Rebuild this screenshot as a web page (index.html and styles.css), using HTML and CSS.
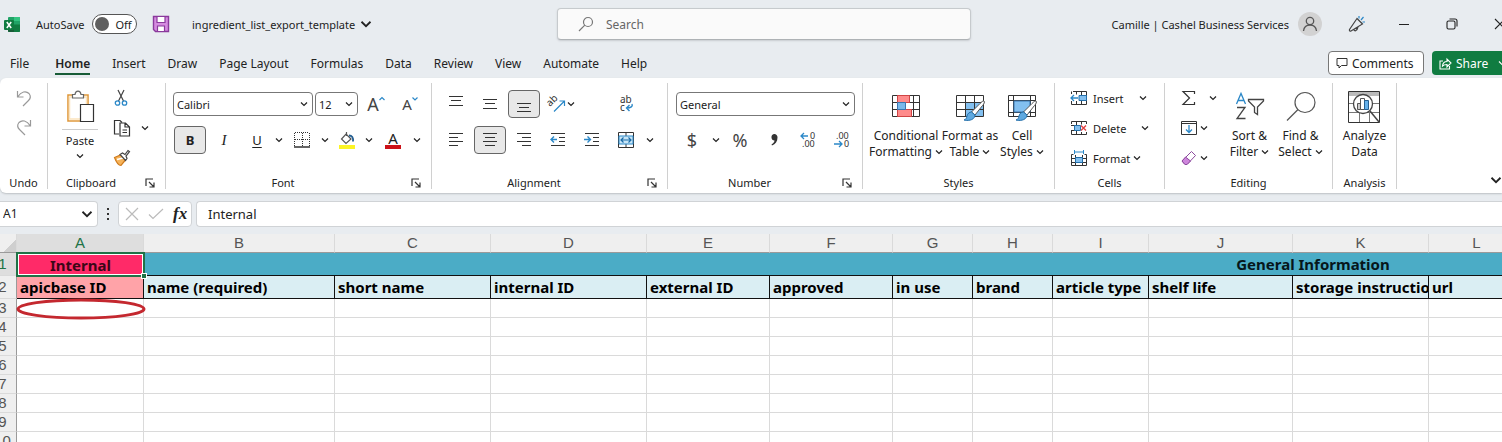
FILE: index.html
```html
<!DOCTYPE html>
<html lang="en">
<head>
  <meta charset="UTF-8">
  <title>ingredient_list_export_template</title>
  <link rel="stylesheet" href="styles.css">
</head>
<body>
  <!-- shared icons -->
  <svg class="sprite" aria-hidden="true">
    <symbol id="chev" viewBox="0 0 8 8"><path d="M1 2.500L4 5.500l3-3" fill="none" stroke="currentColor" stroke-width="1.200"/></symbol>
    <symbol id="launch" viewBox="0 0 10 10"><path d="M1 8V1h7M4 4l4.500 4.500M9 4.500V9H4.500" fill="none" stroke="#333" stroke-width="1.200"/></symbol>
    <symbol id="brush" viewBox="0 0 22 22"><path d="M21 1c1 1 0 3-1.500 4.500L12 15l-3.500-3L17 3.500C18.500 2 20 .5 21 1z" fill="#fff" stroke="#555"/><path d="M8.500 12l3.500 3c0 4-5 6.500-11 5 2-.5 2.500-2 3-4 .5-2.500 2.500-4 4.500-4z" fill="#5fa9e0" stroke="#2470ab"/></symbol>
  </svg>

  <!-- ===== Title bar ===== -->
  <header class="title-bar">
    <svg class="logo" width="17" height="17" viewBox="0 0 17 17"><rect x="4" y="1" width="12" height="15" rx="1" fill="#21a366"/><path d="M10 1h5a1 1 0 0 1 1 1v3h-6z" fill="#33c481"/><path d="M4 8.500h6V16H5a1 1 0 0 1-1-1z" fill="#185c37"/><path d="M10 8.500h6V15a1 1 0 0 1-1 1h-5z" fill="#107c41"/><rect y="4" width="10" height="10" rx="1" fill="#107c41"/><path d="M2.800 6l4.400 6M7.200 6l-4.400 6" stroke="#fff" stroke-width="1.500"/></svg>
    <label class="autosave">AutoSave
      <input type="checkbox">
      <span class="switch"><span class="knob"></span>Off</span>
    </label>
    <button class="plain save" aria-label="Save"><svg width="18" height="18" viewBox="0 0 18 18"><path d="M1.500 1.500h15v15H3.500l-2-2z" fill="#d58be0" stroke="#8a3a9c" stroke-width="1.400"/><path d="M5 1.500h8v6H5zM5.500 11h7v5.500h-7z" fill="#fff" stroke="#8a3a9c" stroke-width="1.200"/></svg></button>
    <button class="plain file-name">ingredient_list_export_template <svg class="chev-lg"><use href="#chev"/></svg></button>
    <label class="search">
      <svg width="16" height="16" viewBox="0 0 16 16" fill="none" stroke="#777" stroke-width="1.200"><circle cx="10" cy="6" r="4.500"/><path d="M6.800 9.200L1 15"/></svg>
      <input type="text" placeholder="Search" aria-label="Search">
    </label>
    <div class="account">
      <span>Camille | Cashel Business Services</span>
      <svg width="24" height="24" viewBox="0 0 24 24"><circle cx="12" cy="12" r="12" fill="#d2d2d2"/><g fill="none" stroke="#555" stroke-width="1.300"><circle cx="12" cy="9" r="3.700"/><path d="M5.500 19c.5-4 3-6 6.500-6s6 2 6.500 6"/></g></svg>
    </div>
    <div class="window-buttons">
      <button class="plain" aria-label="Coming soon"><svg width="18" height="18" viewBox="0 0 18 18" fill="none" stroke="#444" stroke-width="1.200"><path d="M9 3.500L1.500 14.500c-.5 1 .5 2 1.500 1.500L14.500 9zM6 14.500c0 2 3 2 4-2.500"/><path d="M11 3.500V1M13 5l2.500-3M14.500 7H17" stroke="#2b88c8"/></svg></button>
      <button class="plain" aria-label="Minimize"><svg width="12" height="12" viewBox="0 0 12 12"><path d="M1 6.500h10" stroke="#222"/></svg></button>
      <button class="plain" aria-label="Restore"><svg width="12" height="12" viewBox="0 0 12 12" fill="none" stroke="#222" stroke-width="1.100"><rect x="1" y="3" width="8" height="8" rx="1.500"/><path d="M3.500 1H9a2 2 0 0 1 2 2v5.500"/></svg></button>
      <button class="plain" aria-label="Close"><svg width="12" height="12" viewBox="0 0 12 12"><path d="M1 1l10 10M11 1L1 11" stroke="#222" stroke-width="1.100"/></svg></button>
    </div>
  </header>

  <!-- ===== Tabs ===== -->
  <nav class="tabs">
    <a href="#">File</a>
    <a href="#" class="active">Home</a>
    <a href="#">Insert</a>
    <a href="#">Draw</a>
    <a href="#">Page Layout</a>
    <a href="#">Formulas</a>
    <a href="#">Data</a>
    <a href="#">Review</a>
    <a href="#">View</a>
    <a href="#">Automate</a>
    <a href="#">Help</a>
    <div class="tab-actions">
      <button class="comments"><svg width="12" height="12" viewBox="0 0 12 12"><path d="M1 1.500h10v7H5.500L3 11V8.500H1z" fill="none" stroke="#333"/></svg>Comments</button>
      <button class="share"><svg width="13" height="13" viewBox="0 0 13 13" fill="none" stroke="#fff" stroke-width="1.100"><path d="M4 4H1v8h9.500V9"/><path d="M3.500 9c.3-3 2-4.500 4.500-4.500V2l4 4-4 4V7.500C6 7.500 4.500 8 3.500 9z"/></svg>Share<svg class="chev"><use href="#chev"/></svg></button>
    </div>
  </nav>

  <!-- ===== Ribbon ===== -->
  <section class="ribbon">
    <div class="group">
      <div class="stack undo">
        <button class="plain" aria-label="Undo"><svg width="16" height="18" viewBox="0 0 16 18" fill="none" stroke="#999" stroke-width="1.200"><path d="M1.500 2v6h6M2 7.500c3-5 8-6 11-3 2 2.500 1.500 5-.5 7L7 17"/></svg></button>
        <button class="plain" aria-label="Redo"><svg width="16" height="18" viewBox="0 0 16 18" fill="none" stroke="#999" stroke-width="1.200"><path d="M14.500 1v6h-6M14 6.500c-3-5-8-6-11-3-2 2.500-1.500 5 .5 7L9 16"/></svg></button>
      </div>
      <div class="caption"><span>Undo</span></div>
    </div>

    <div class="group">
      <div class="group-body clipboard">
        <button class="plain paste">
          <svg width="30" height="32" viewBox="0 0 30 32"><path d="M3 5h20v26H3z" fill="#fff" stroke="#e0993c" stroke-width="1.600"/><path d="M4.500 7h17v22h-17z" fill="#fff" stroke="#fbe3bd" stroke-width="1.500"/><path d="M7.500 8V4.500H10c.5-4.500 5.500-4.500 6 0h2.500V8z" fill="#fff" stroke="#666" stroke-width="1.200"/><path d="M15.500 14.500h13v17h-13z" fill="#fff" stroke="#333" stroke-width="1.200"/></svg>
          <span class="paste-text">Paste</span>
          <svg class="chev"><use href="#chev"/></svg>
        </button>
        <div class="stack">
          <button class="plain" aria-label="Cut"><svg width="16" height="18" viewBox="0 0 16 18" fill="none"><path d="M5 1l5.500 11M11 1L5.500 12" stroke="#444" stroke-width="1.200"/><circle cx="4.500" cy="14" r="2.200" stroke="#2b88c8" stroke-width="1.300"/><circle cx="11.500" cy="14" r="2.200" stroke="#2b88c8" stroke-width="1.300"/></svg></button>
          <button class="plain wide" aria-label="Copy"><svg width="18" height="18" viewBox="0 0 18 18" fill="#fff" stroke="#333" stroke-width="1.200"><path d="M6 15H1.500V1.500H7l2 2"/><path d="M7 4h5.500L16.500 8v9H7zM12 4v4h4.500M9.500 11h4.500M9.500 13.500h4.500"/></svg><svg class="chev"><use href="#chev"/></svg></button>
          <button class="plain" aria-label="Format Painter"><svg width="18" height="18" viewBox="0 0 18 18"><path d="M1.500 8.500l6-2.500 5 5-4.500 5.500c-3 0-5-4-6.500-8z" fill="#f6b35a" stroke="#cf7a1c" stroke-width="1.200"/><path d="M4 10.500l6-1.500" stroke="#fff" stroke-width="1.500"/><path d="M7 5.500l2.500-1.500L12 5.500 15 1.500l1.500 1.200L13 7l1 2.500-1.500 2z" fill="#fff" stroke="#444" stroke-width="1.200"/></svg></button>
        </div>
      </div>
      <div class="caption has-launch"><span>Clipboard</span><svg class="launch"><use href="#launch"/></svg></div>
    </div>

    <div class="group">
      <div class="group-body rows">
        <div class="font-row">
          <label class="combo font-name"><select aria-label="Font"><option>Calibri</option></select><svg class="chev"><use href="#chev"/></svg></label>
          <label class="combo font-size"><select aria-label="Font size"><option>12</option></select><svg class="chev"><use href="#chev"/></svg></label>
          <button class="tool glyph" aria-label="Increase font size">A<svg class="caret" width="6" height="18" viewBox="0 0 6 18"><path d="M.5 5L3 2.500 5.500 5" fill="none" stroke="#2b88c8" stroke-width="1.200"/></svg></button>
          <button class="tool glyph small" aria-label="Decrease font size">A<svg class="caret" width="6" height="18" viewBox="0 0 6 18"><path d="M.5 2.500L3 5l2.500-2.500" fill="none" stroke="#2b88c8" stroke-width="1.200"/></svg></button>
        </div>
        <div class="format-row">
          <button class="tool pressed bold">B</button>
          <button class="tool italic">I</button>
          <button class="tool underline">U</button>
          <svg class="chev"><use href="#chev"/></svg>
          <button class="tool" aria-label="Borders"><svg width="16" height="16" viewBox="0 0 16 16" stroke="#333"><path d="M1 .5h14M.5 1v13M15.500 1v13M8.500 1v13M1 7.500h14" stroke-dasharray="1 1" fill="none"/><path d="M0 15h16" stroke-width="1.500"/></svg></button>
          <svg class="chev"><use href="#chev"/></svg>
          <button class="tool" aria-label="Fill color"><svg width="18" height="18" viewBox="0 0 18 18"><path d="M8.500 1v4M8 3l5 5-5 4.500L3.500 8z" fill="#fff" stroke="#555" stroke-width="1.200"/><path d="M11 4.500c3 0 4.500 2 4 6" fill="none" stroke="#245f91" stroke-width="1.800"/><path d="M1 14h16v4H1z" fill="#fcf425"/></svg></button>
          <svg class="chev"><use href="#chev"/></svg>
          <button class="tool font-color">A</button>
          <svg class="chev"><use href="#chev"/></svg>
        </div>
      </div>
      <div class="caption has-launch"><span>Font</span><svg class="launch"><use href="#launch"/></svg></div>
    </div>

    <div class="group">
      <div class="group-body rows">
        <div class="align-row">
          <button class="tool" aria-label="Top align"><svg width="16" height="18" viewBox="0 0 16 18" stroke="#333"><path d="M1 1.500h14M3 5.500h10M1 10.500h14"/></svg></button>
          <button class="tool" aria-label="Middle align"><svg width="16" height="18" viewBox="0 0 16 18" stroke="#333"><path d="M1 4.500h14M3 8.500h10M1 13.500h14"/></svg></button>
          <button class="tool pressed" aria-label="Bottom align"><svg width="16" height="18" viewBox="0 0 16 18" stroke="#333"><path d="M1 8.500h14M3 12.500h10M1 16.500h14"/></svg></button>
          <button class="tool orient" aria-label="Orientation"><svg width="20" height="20" viewBox="0 0 20 20"><text x="3" y="13" transform="rotate(-45 3 13)" class="svg-text">ab</text><path d="M7 17.500L17 7.500M12.500 7h5v5" fill="none" stroke="#2b88c8" stroke-width="1.200"/></svg><svg class="chev"><use href="#chev"/></svg></button>
          <button class="tool wrap" aria-label="Wrap text"><svg width="16" height="20" viewBox="0 0 16 20"><text x="2" y="9" class="svg-text">ab</text><text x="2" y="17" class="svg-text">c</text><path d="M14 10c1 2.500-1 4-5.500 4M11.500 11l-3 3 3 3" fill="none" stroke="#2b88c8" stroke-width="1.400"/></svg></button>
        </div>
        <div class="align-row">
          <button class="tool" aria-label="Align left"><svg width="16" height="16" viewBox="0 0 16 16" stroke="#333"><path d="M1 1.500h14M1 5.500h9M1 9.500h14M1 13.500h9"/></svg></button>
          <button class="tool pressed" aria-label="Center"><svg width="16" height="16" viewBox="0 0 16 16" stroke="#333"><path d="M1 1.500h14M3 5.500h10M1 9.500h14M3 13.500h10"/></svg></button>
          <button class="tool" aria-label="Align right"><svg width="16" height="16" viewBox="0 0 16 16" stroke="#333"><path d="M1 1.500h14M6 5.500h9M1 9.500h14M6 13.500h9"/></svg></button>
          <button class="tool" aria-label="Decrease indent"><svg width="16" height="16" viewBox="0 0 16 16" fill="none" stroke="#333"><path d="M1 1.500h14M9 5.500h6M9 9.500h6M1 13.500h14"/><path d="M7 7.500H1M4 4.500l-3 3 3 3" stroke="#2b88c8" stroke-width="1.400"/></svg></button>
          <button class="tool" aria-label="Increase indent"><svg width="16" height="16" viewBox="0 0 16 16" fill="none" stroke="#333"><path d="M1 1.500h14M9 5.500h6M9 9.500h6M1 13.500h14"/><path d="M0 7.500h6M3.500 4.500l3 3-3 3" stroke="#2b88c8" stroke-width="1.400"/></svg></button>
          <button class="tool" aria-label="Merge and center"><svg width="16" height="16" viewBox="0 0 16 16" fill="none" stroke="#333"><path d="M.5 .5h15v15H.5zM8 1v3M8 12v3"/><path d="M1 4h14v8H1z" fill="#c9e6f7" stroke="#2b88c8"/><path d="M3 8h10M5.500 5.500L3 8l2.500 2.500M10.500 5.500L13 8l-2.500 2.500" stroke="#1b6ca8" stroke-width="1.200"/></svg></button>
          <svg class="chev"><use href="#chev"/></svg>
        </div>
      </div>
      <div class="caption has-launch"><span>Alignment</span><svg class="launch"><use href="#launch"/></svg></div>
    </div>

    <div class="group">
      <div class="group-body rows">
        <div class="number-format">
          <label class="combo"><select aria-label="Number format"><option>General</option></select><svg class="chev"><use href="#chev"/></svg></label>
        </div>
        <div class="number-row">
          <button class="tool glyph">$</button>
          <svg class="chev"><use href="#chev"/></svg>
          <button class="tool glyph">%</button>
          <button class="tool" aria-label="Comma style"><svg width="10" height="14" viewBox="0 0 10 14"><path d="M5 1a3.200 3.200 0 0 1 3.500 3.500c0 4-2 6.500-5.500 8L2.500 11.500c2-1.200 3-2.500 3-4A3.300 3.300 0 0 1 5 1z" fill="#333"/></svg></button>
          <button class="tool" aria-label="Increase decimal"><svg width="18" height="20" viewBox="0 0 18 20"><text x="11" y="9" class="svg-num">0</text><text x="3" y="17" class="svg-num">.00</text><path d="M9 6H2M5 3L2 6l3 3" fill="none" stroke="#2b88c8" stroke-width="1.300"/></svg></button>
          <button class="tool" aria-label="Decrease decimal"><svg width="18" height="20" viewBox="0 0 18 20"><text x="3" y="9" class="svg-num">.00</text><text x="11" y="17" class="svg-num">0</text><path d="M1 14h8M6 11l3 3-3 3" fill="none" stroke="#2b88c8" stroke-width="1.300"/></svg></button>
        </div>
      </div>
      <div class="caption has-launch"><span>Number</span><svg class="launch"><use href="#launch"/></svg></div>
    </div>

    <div class="group">
      <div class="group-body styles">
        <button class="plain big">
          <svg width="30" height="30" viewBox="0 0 30 30"><g stroke="#333" fill="#fff"><path d="M1.500 3.500h27v21h-27zM1.500 10.500h27M1.500 17.500h27M6.500 3.500v21M22.500 3.500v21"/></g><path d="M6.500 3.500h12v7h-12zM6.500 17.500h14v7h-14z" fill="#ff8b8b" stroke="#d04545"/><path d="M6.500 10.500h8v7h-8z" fill="#7ab8ea" stroke="#3a76b0"/></svg>
          <span>Conditional<br>Formatting <svg class="chev"><use href="#chev"/></svg></span>
        </button>
        <button class="plain big">
          <svg width="30" height="30" viewBox="0 0 30 30"><path d="M1.500 3.500h27v21h-27z" fill="#fff" stroke="#333"/><path d="M10 10h18v14H10z" fill="#83c0f0"/><path d="M1.500 10.500h27M1.500 17.500h27M10.500 3.500v21M19.500 3.500v21" stroke="#333"/><use href="#brush" x="8" y="8" width="22" height="22"/></svg>
          <span>Format as<br>Table <svg class="chev"><use href="#chev"/></svg></span>
        </button>
        <button class="plain big">
          <svg width="30" height="30" viewBox="0 0 30 30"><path d="M1.500 3.500h27v21h-27zM1.500 8.500h27M1.500 20.500h27M6.500 3.500v21M23.500 3.500v21" fill="#fff" stroke="#333"/><path d="M7 9h16v11H7z" fill="#83c0f0" stroke="#3a76b0"/><use href="#brush" x="8" y="8" width="22" height="22"/></svg>
          <span>Cell<br>Styles <svg class="chev"><use href="#chev"/></svg></span>
        </button>
      </div>
      <div class="caption"><span>Styles</span></div>
    </div>

    <div class="group">
      <div class="stack cells">
        <button class="plain insert"><svg width="16" height="14" viewBox="0 0 16 14" fill="none" stroke="#333"><path d="M2 .5h13.500v13H.5V10M.5 3V.5M5.500 .5v3M5.500 10v3M10.500 .5v13M8 9.500h7"/><path d="M8 4.500h7.500v5H8z" fill="#83c0f0" stroke="#2470ab"/><path d="M7 7H0M3 4L0 7l3 3" stroke="#2b88c8" stroke-width="1.300"/></svg>Insert<svg class="chev"><use href="#chev"/></svg></button>
        <button class="plain delete"><svg width="16" height="14" viewBox="0 0 16 14" fill="none" stroke="#333"><path d="M.5 3V.5h15V3M.5 10v3.500h15V11M5.500 .5v13M10.500 .5v3M10.500 11v2.500M0 4.500h4M0 9.500h4"/><path d="M3.500 4.500h6v5h-6z" fill="#83c0f0" stroke="#2470ab"/><path d="M10 4.500l5 5M15 4.500l-5 5" stroke="#e04040" stroke-width="1.400"/></svg>Delete<svg class="chev"><use href="#chev"/></svg></button>
        <button class="plain format"><svg width="16" height="16" viewBox="0 0 16 16" fill="none" stroke="#333"><path d="M2.500 4.500h-2v11h15v-11h-2M.5 8.500h15M.5 12.500h15M4.500 5v10M11.500 5v10"/><path d="M4.500 7.500h7v5h-7z" fill="#83c0f0" stroke="#2470ab"/><path d="M3.500 2h9M3.500 0v4M12.500 0v4" stroke="#2b88c8"/></svg>Format<svg class="chev"><use href="#chev"/></svg></button>
      </div>
      <div class="caption"><span>Cells</span></div>
    </div>

    <div class="group">
      <div class="group-body editing">
        <div class="stack">
          <button class="plain sum" aria-label="AutoSum"><svg width="16" height="16" viewBox="0 0 16 16"><path d="M13.500 4V1.500H2L8.500 8 2 14.500h11.500V12" fill="none" stroke="#333" stroke-width="1.200"/></svg><svg class="chev"><use href="#chev"/></svg></button>
          <button class="plain" aria-label="Fill"><svg width="16" height="14" viewBox="0 0 16 14" fill="none" stroke="#333"><path d="M.5 .5h15v13H.5zM.5 2.500h15"/><path d="M8 4v7M5 8.500l3 3 3-3" stroke="#2b88c8" stroke-width="1.300"/></svg><svg class="chev"><use href="#chev"/></svg></button>
          <button class="plain" aria-label="Clear"><svg width="16" height="16" viewBox="0 0 16 16"><path d="M10.500 1.500l4 4-8.500 9H4L1 11z" fill="#fff" stroke="#8d4a9e"/><path d="M4.500 7l5 4-3.500 3.500H4L1 11z" fill="#ce86dc" stroke="#8d4a9e"/></svg><svg class="chev"><use href="#chev"/></svg></button>
        </div>
        <button class="plain big">
          <svg width="30" height="30" viewBox="0 0 30 30" fill="none"><path d="M1.500 12L6 1.500 10.500 12M3 8.500h6" stroke="#2b88c8" stroke-width="1.300"/><path d="M2 15.500h8L2 26.500h8.500" stroke="#444" stroke-width="1.300"/><path d="M13.500 7.500h15V9L22.500 15v7.500l-3-2V15l-6-6z" stroke="#444" stroke-width="1.300"/></svg>
          <span>Sort &amp;<br>Filter <svg class="chev"><use href="#chev"/></svg></span>
        </button>
        <button class="plain big">
          <svg width="30" height="30" viewBox="0 0 30 30" fill="none" stroke="#555" stroke-width="1.200"><circle cx="19" cy="10.500" r="10"/><path d="M12 17.500L1 28.500"/></svg>
          <span>Find &amp;<br>Select <svg class="chev"><use href="#chev"/></svg></span>
        </button>
      </div>
      <div class="caption"><span>Editing</span></div>
    </div>

    <div class="group">
      <div class="group-body analysis">
        <button class="plain big">
          <svg width="32" height="32" viewBox="0 0 32 32" fill="none"><path d="M.5 .5h31v31H.5z" fill="#fff" stroke="#333"/><path d="M1 1h30v4H1z" fill="#bbb"/><path d="M1 12.500h30M1 21.500h30M11.500 21v10M21.500 21v10" stroke="#777"/><circle cx="15" cy="13" r="9.500" fill="#fff" stroke="#444" stroke-width="1.300"/><path d="M22 20l9 11" stroke="#444" stroke-width="1.500"/><path d="M9.500 12.500h3v6h-3z" fill="#ccc" stroke="#555"/><path d="M12.500 7.500h4v11h-4z" fill="#fff" stroke="#555"/><path d="M16.500 9.500h4v9h-4z" fill="#65b1eb" stroke="#245f91"/></svg>
          <span>Analyze<br>Data</span>
        </button>
      </div>
      <div class="caption"><span>Analysis</span></div>
    </div>

    <button class="plain collapse" aria-label="Collapse ribbon"><svg class="chev-lg"><use href="#chev"/></svg></button>
  </section>

  <!-- ===== Formula bar ===== -->
  <section class="formula-bar">
    <label class="name-box"><input type="text" value="A1" aria-label="Name box"><svg class="chev-lg"><use href="#chev"/></svg></label>
    <svg class="dots" width="4" height="12" viewBox="0 0 4 12" fill="#333"><path d="M1 0h2v2H1zM1 5h2v2H1zM1 10h2v2H1z"/></svg>
    <div class="formula-buttons">
      <button class="plain" aria-label="Cancel"><svg width="14" height="14" viewBox="0 0 14 14"><path d="M1 1l12 12M13 1L1 13" stroke="#bbb" stroke-width="1.200"/></svg></button>
      <button class="plain" aria-label="Enter"><svg width="16" height="12" viewBox="0 0 16 12"><path d="M1 6.500l4 4L15 1" fill="none" stroke="#bbb" stroke-width="1.200"/></svg></button>
      <button class="plain fx">fx</button>
    </div>
    <input class="formula" type="text" value="Internal" aria-label="Formula">
  </section>

  <!-- ===== Sheet ===== -->
  <main class="sheet">
    <table>
      <colgroup>
        <col class="w-head"><col class="w-a"><col class="w-b"><col class="w-c"><col class="w-c"><col class="w-e"><col class="w-e"><col class="w-g"><col class="w-g"><col class="w-i"><col class="w-j"><col class="w-k"><col class="w-i"><col class="w-rest">
      </colgroup>
      <thead>
        <tr>
          <th class="corner"></th>
          <th class="selected">A</th><th>B</th><th>C</th><th>D</th><th>E</th><th>F</th><th>G</th><th>H</th><th>I</th><th>J</th><th>K</th><th>L</th><th></th>
        </tr>
      </thead>
      <tbody id="rows">
        <tr class="section-row">
          <th class="selected">1</th>
          <td class="internal">Internal<span class="fill-handle"></span></td>
          <td class="general" colspan="12">General Information</td>
        </tr>
        <tr class="field-row">
          <th>2</th>
          <td class="apicbase">apicbase ID</td>
          <td>name (required)</td>
          <td>short name</td>
          <td>internal ID</td>
          <td>external ID</td>
          <td>approved</td>
          <td>in use</td>
          <td>brand</td>
          <td>article type</td>
          <td>shelf life</td>
          <td>storage instructions</td>
          <td>url</td>
          <td></td>
        </tr>
        <tr>
          <th>3</th>
          <td class="circled"><svg class="ring" viewBox="0 0 130 22"><ellipse cx="65" cy="11" rx="63" ry="9" fill="none" stroke="#c4282f" stroke-width="3"/></svg></td>
          <td></td><td></td><td></td><td></td><td></td><td></td><td></td><td></td><td></td><td></td><td></td><td></td>
        </tr>
      </tbody>
    </table>
  </main>
  <script>
    // Empty rows below the header rows
    const rows = document.getElementById('rows');
    for (let n = 4; n <= 10; n++) {
      const tr = document.createElement('tr');
      tr.innerHTML = `<th>${n}</th>` + '<td></td>'.repeat(13);
      rows.appendChild(tr);
    }
  </script>
</body>
</html>
```
FILE: styles.css
```css
* {
  box-sizing: border-box;
}
body {
  margin: 0;
  height: 100vh;
  display: flex;
  flex-direction: column;
  overflow: hidden;
  background-color: #e8ecf0;
  color: #222;
  font-family: "Noto Sans", "Open Sans", sans-serif;
  font-size: 12px;
}
button, input, select {
  font: inherit;
  color: inherit;
}
button {
  cursor: pointer;
}
svg {
  flex: none;
  overflow: visible;
}
.sprite {
  position: absolute;
  width: 0;
  height: 0;
}
.plain {
  border: none;
  background: none;
  padding: 0;
  display: flex;
  align-items: center;
}
.chev {
  width: 8px;
  height: 8px;
}
.chev-lg {
  width: 12px;
  height: 12px;
}

/* Title bar */
.title-bar {
  display: grid;
  grid-template-columns: 32px 120px 40px 365px minmax(200px, 414px) 1fr 180px;
  align-items: center;
  height: 48px;
  font-size: 11px;
}
.logo {
  margin-left: 4px;
}
.autosave {
  display: flex;
  align-items: center;
  gap: 8px;
  padding-left: 4px;
}
.autosave input {
  position: absolute;
  opacity: 0;
}
.switch {
  display: flex;
  align-items: center;
  gap: 6px;
  width: 45px;
  height: 20px;
  padding-left: 2px;
  border: 1px solid #555;
  border-radius: 10px;
  background-color: #fff;
}
.knob {
  width: 14px;
  height: 14px;
  border-radius: 50%;
  background-color: #5f5f5f;
}
.file-name {
  gap: 5px;
}
.search {
  display: flex;
  align-items: center;
  gap: 10px;
  height: 32px;
  padding-left: 20px;
  border: 1px solid #c6cacd;
  border-bottom-color: #aeb2b5;
  border-radius: 4px;
  background-color: #fafafa;
  box-shadow: 0 1px 2px #c8ccd0;
}
.search input {
  flex: 1;
  border: none;
  background: none;
  outline: none;
  font-size: 12px;
}
.search input::placeholder {
  color: #666;
}
.account {
  display: flex;
  justify-content: flex-end;
  align-items: center;
  gap: 9px;
  white-space: nowrap;
}
.window-buttons {
  display: flex;
  gap: 36px;
  align-items: center;
  padding-left: 26px;
}
.window-buttons button:first-child {
  margin-right: -4px;
}

/* Tabs */
.tabs {
  display: flex;
  align-items: center;
  gap: 22px;
  height: 30px;
  padding-left: 10px;
}
.tabs a {
  padding-top: 3px;
  color: #222;
  text-decoration: none;
  white-space: nowrap;
  line-height: 18px;
  border-bottom: 2px solid transparent;
}
.tabs a:first-child {
  margin-right: 4px;
}
.tabs .active {
  font-weight: 600;
  border-bottom-color: #185c37;
}
.tab-actions {
  display: flex;
  gap: 8px;
  margin-left: auto;
}
.comments, .share {
  display: flex;
  align-items: center;
  gap: 4px;
  height: 24px;
  border-radius: 4px;
}
.comments {
  width: 96px;
  padding: 0 7px;
  border: 1px solid #777;
  background-color: #fff;
}
.share {
  width: 70px;
  padding: 0 0 0 7px;
  border: none;
  border-radius: 4px 0 0 4px;
  background-color: #107c41;
  color: #fff;
}
.share .chev {
  margin-left: 6px;
}

/* Ribbon */
.ribbon {
  display: grid;
  grid-template-columns: 48px 118px 266px 236px 195px 192px 110px 168px 64px 1fr;
  height: 115px;
  background-color: #fff;
  border-radius: 6px 0 0 6px;
  box-shadow: 0 1px 2px #bcc0c4;
}
.group {
  display: flex;
  flex-direction: column;
  margin: 5px 0 4px;
  border-right: 1px solid #d0d0d0;
}
.group-body, .stack {
  flex: 1;
}
.caption {
  display: grid;
  align-items: center;
  font-size: 11px;
  line-height: 13px;
}
.has-launch {
  grid-template-columns: 1fr 31px;
}
.caption span {
  text-align: center;
  white-space: nowrap;
}
.launch {
  width: 10px;
  height: 10px;
  justify-self: center;
}
.stack {
  display: flex;
  flex-direction: column;
}
.stack button {
  height: 30px;
}
.undo {
  align-items: center;
}
.group-body {
  display: flex;
}
.clipboard {
  padding-left: 14px;
  gap: 15px;
}
.paste {
  flex-direction: column;
  align-items: center;
  width: 36px;
  padding-top: 7px;
  font-size: 11px;
}
.paste-text {
  width: 36px;
  margin-top: 7px;
  padding: 4px 0;
  line-height: 14px;
  border-top: 1px solid #ccc;
}
.clipboard .wide {
  gap: 10px;
}
.rows {
  flex-direction: column;
  gap: 8px;
  padding: 7px 0 0 7px;
}
.font-row {
  display: flex;
  align-items: center;
  gap: 2px;
}
.combo {
  display: grid;
  grid-template-columns: 1fr 13px;
  align-items: center;
}
.combo select {
  grid-area: 1 / 1 / 2 / 3;
  width: 100%;
  height: 24px;
  padding: 0 3px;
  appearance: none;
  border: 1px solid #777;
  border-radius: 4px;
  background-color: #fff;
  font-size: 11px;
}
.combo .chev {
  grid-area: 1 / 2;
  pointer-events: none;
}
.font-name {
  width: 140px;
}
.font-size {
  width: 43px;
}
.number-format {
  display: flex;
  align-items: center;
  height: 28px;
  padding: 0 7px 0 1px;
}
.number-format .combo {
  flex: 1;
}
.tool {
  display: flex;
  align-items: center;
  justify-content: center;
  width: 32px;
  height: 28px;
  padding: 0;
  border: 1px solid transparent;
  border-radius: 4px;
  background: none;
}
.pressed {
  border-color: #666;
  background-color: #e8e8e8;
}
.glyph {
  font-size: 18px;
  color: #444;
}
.small {
  font-size: 15px;
}
.bold {
  font-weight: bold;
  font-size: 13px;
}
.italic {
  font-family: "Liberation Serif", serif;
  font-style: italic;
  font-size: 15px;
}
.underline {
  text-decoration: underline;
  text-underline-offset: 2px;
  font-size: 13px;
}
.font-color {
  width: 16px;
  height: 18px;
  border: none;
  border-bottom: 4px solid #cc1118;
  border-radius: 0;
  font-size: 15px;
  line-height: 14px;
}
.format-row, .align-row, .number-row {
  display: grid;
  align-items: center;
  justify-items: center;
  height: 28px;
}
.format-row {
  grid-template-columns: 34px 34px 32px 12px 34px 12px 32px 12px 36px 12px;
}
.align-row {
  grid-template-columns: repeat(6, 34px) 14px;
}
.align-row .orient {
  justify-content: flex-start;
  padding-left: 4px;
}
.align-row .wrap {
  grid-column: 6;
}
.number-row {
  grid-template-columns: 34px 14px repeat(4, 34px);
}
.svg-text {
  font-size: 10px;
  fill: #333;
}
.svg-num {
  font-size: 9px;
  fill: #333;
}
.big {
  flex-direction: column;
  padding-top: 8px;
  line-height: 16px;
  text-align: center;
  white-space: nowrap;
}
.big > svg {
  height: 32px;
}
.big span {
  margin-top: 5px;
}
.styles {
  display: grid;
  grid-template-columns: 68px 60px 44px;
  padding-left: 9px;
  align-items: start;
}
.cells {
  padding-left: 16px;
}
.cells button {
  font-size: 11px;
}
.cells button > svg:first-child {
  margin-right: 6px;
}
.insert .chev, .delete .chev {
  margin-left: 15px;
}
.format .chev {
  margin-left: 3px;
}
.editing {
  display: grid;
  grid-template-columns: 43px 51px 51px;
  padding-left: 16px;
  align-items: start;
}
.editing .stack button {
  gap: 3px;
}
.editing .stack .sum {
  gap: 12px;
}
.analysis {
  justify-content: center;
  align-items: flex-start;
}
.collapse {
  align-self: end;
  justify-self: end;
  padding-bottom: 7px;
}

/* Formula bar */
.formula-bar {
  display: grid;
  grid-template-columns: 98px 20px 74px 1fr;
  align-items: center;
  height: 41px;
}
.name-box, .formula-buttons, .formula {
  height: 26px;
  border: 1px solid #d0d3d6;
  border-radius: 4px;
  background-color: #fff;
}
.name-box {
  display: flex;
  align-items: center;
  padding-right: 4px;
  border-left: none;
  border-radius: 0 4px 4px 0;
}
.name-box input {
  flex: 1;
  min-width: 0;
  padding: 0 3px;
  border: none;
  outline: none;
  background: none;
}
.dots {
  justify-self: center;
}
.formula-buttons {
  display: flex;
  align-items: center;
  gap: 9px;
  padding-left: 6px;
}
.fx {
  font-family: "Liberation Serif", serif;
  font-style: italic;
  font-weight: bold;
  font-size: 17px;
}
.formula {
  margin-left: 4px;
  padding: 0 11px;
  outline: none;
  border-right: none;
  border-radius: 4px 0 0 4px;
  font-size: 13px;
}

/* Sheet */
.sheet {
  flex: 1;
  min-height: 0;
  overflow: hidden;
  background-color: #fff;
}
table {
  table-layout: fixed;
  width: 2494px;
  margin-left: -11px;
  border-spacing: 0;
}
.w-head { width: 28px; }
.w-a { width: 127px; }
.w-b { width: 191px; }
.w-c { width: 156px; }
.w-e { width: 123px; }
.w-g { width: 80px; }
.w-i { width: 96px; }
.w-j { width: 144px; }
.w-k { width: 136px; }
.w-rest { width: 958px; }
th, td {
  height: 19px;
  padding: 0;
  line-height: 18px;
  border-right: 1px solid #dadada;
  border-bottom: 1px solid #dadada;
}
th {
  background-color: #efefef;
  color: #555;
  font-family: "Liberation Sans", sans-serif;
  font-size: 15px;
  font-weight: normal;
}
thead th {
  border-bottom-color: #9a9a9a;
}
tbody th {
  border-right-color: #9a9a9a;
}
.corner {
  background: linear-gradient(135deg, #efefef 72%, #cfcfcf 72%);
}
th.selected {
  background-color: #dedede;
  color: #217346;
}
.section-row td, .field-row td {
  height: 23px;
  line-height: 22px;
  border-color: #111;
  color: #000;
  font-family: "Noto Sans", sans-serif;
  font-weight: bold;
  font-size: 15px;
  white-space: nowrap;
  overflow: hidden;
}
.field-row td {
  padding-left: 3px;
  background-color: #daeef3;
}
.section-row .internal {
  position: relative;
  overflow: visible;
  border: none;
  background-color: #ff2a68;
  color: #3a0716;
  text-align: center;
  outline: 2px solid #1f7246;
  outline-offset: -1px;
  box-shadow: inset 0 0 0 2px #fff;
}
.fill-handle {
  position: absolute;
  right: -3px;
  bottom: -3px;
  width: 6px;
  height: 6px;
  background-color: #1f7246;
  border: 1px solid #fff;
}
.section-row .general {
  background-color: #4bacc6;
  text-align: center;
  color: #06161a;
}
.field-row .apicbase {
  background-color: #ffa3a8;
}
.circled {
  position: relative;
}
.ring {
  position: absolute;
  top: -1px;
  left: -1px;
  width: 130px;
  height: 22px;
}
```
